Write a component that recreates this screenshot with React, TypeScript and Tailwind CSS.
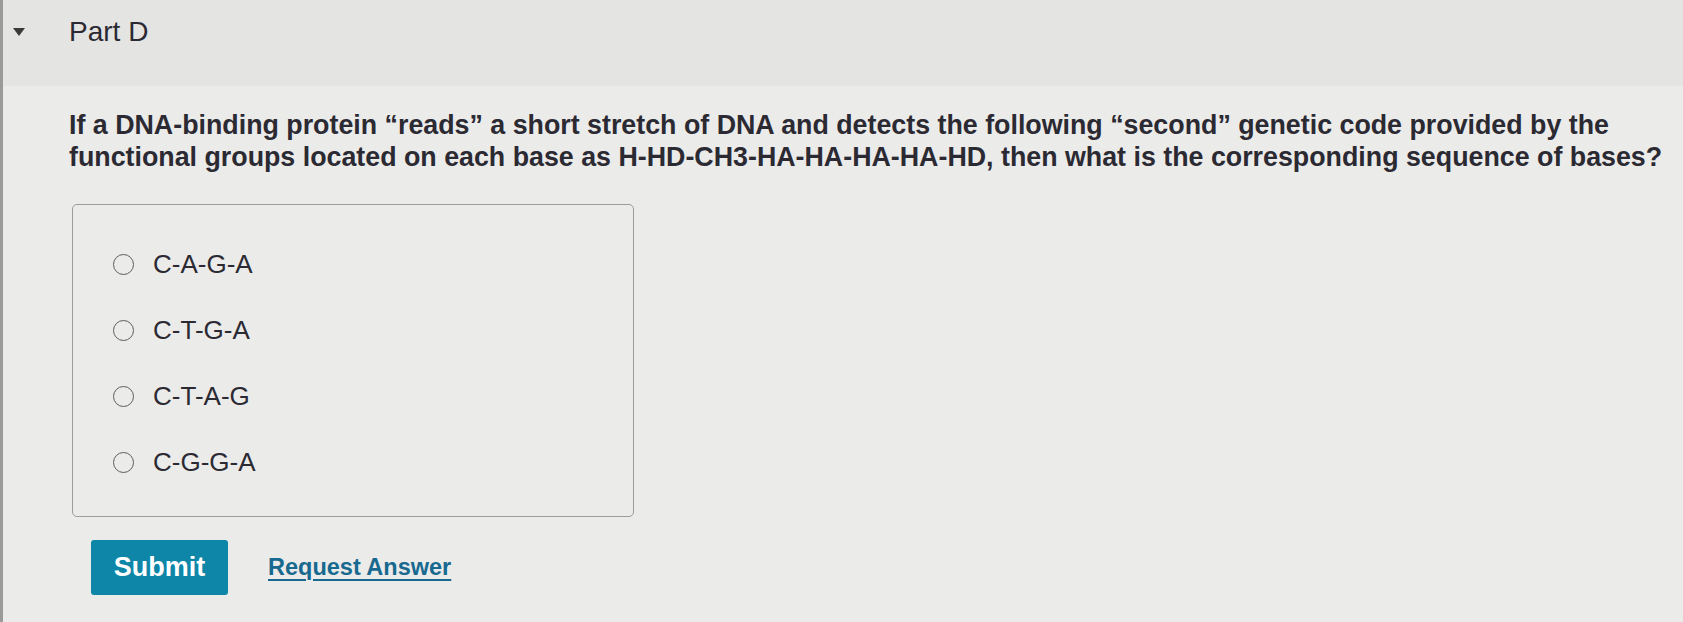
import React from 'react';

const OPTIONS = ['C-A-G-A', 'C-T-G-A', 'C-T-A-G', 'C-G-G-A'];

export default function App() {
  return (
    <div
      className="w-[1683px] h-[622px] overflow-hidden bg-[#ebebea] border-l-[3px] border-[#9a9a9a] text-[#2b2a33]"
      style={{ fontFamily: '"Liberation Sans", Arial, sans-serif' }}
    >
      {/* header */}
      <div className="h-[86px] bg-[#e4e4e3] flex items-center pb-[22px]">
        <svg viewBox="0 0 12 8" className="ml-[10px] w-[12px] h-[8px]">
          <polygon points="0,0 12,0 6,8" fill="#3a3a3a" />
        </svg>
        <span className="ml-[44px] text-[28px] leading-none">Part D</span>
      </div>

      <div className="pl-[66px] pt-[23px]">
        <p className="text-[26.8px] leading-[32px] font-bold">
          If a DNA-binding protein “reads” a short stretch of DNA and detects the following “second” genetic code provided by the
          <br />
          functional groups located on each base as H-HD-CH3-HA-HA-HA-HA-HD, then what is the corresponding sequence of bases?
        </p>

        <div className="mt-[31px] ml-[3px] w-[562px] h-[313px] border-[1.5px] border-[#9c9c9c] rounded-[5px] pl-[40px] pt-[48px] flex flex-col gap-[44px]">
          {OPTIONS.map(o => (
            <label key={o} className="flex items-center gap-[19px] h-[22px]">
              <span className="w-[21px] h-[21px] rounded-full border-[1.5px] border-[#5c5c5c] flex-shrink-0" />
              <span className="text-[26px] leading-none">{o}</span>
            </label>
          ))}
        </div>

        <div className="mt-[23px] ml-[22px] flex items-center gap-[40px]">
          <button className="w-[137px] h-[55px] bg-[#0d86a8] text-white text-[27px] font-bold rounded-[3px]">
            Submit
          </button>
          <a className="text-[23.5px] font-bold text-[#17698f] underline underline-offset-[4px] decoration-[1.5px]">
            Request Answer
          </a>
        </div>
      </div>
    </div>
  );
}
